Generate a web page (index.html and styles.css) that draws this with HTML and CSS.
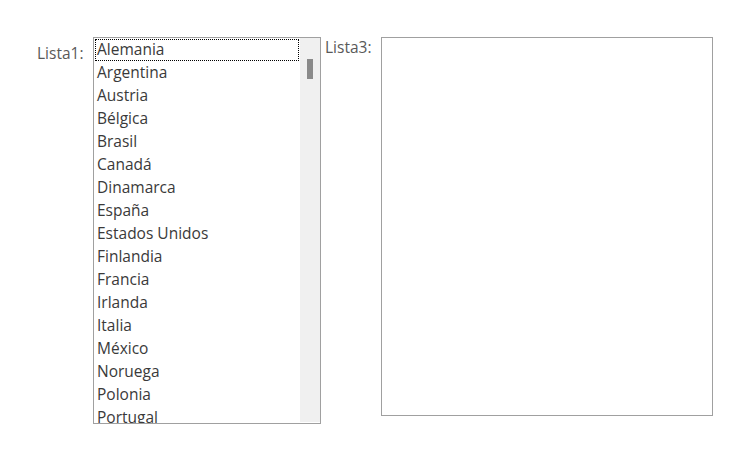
FILE: index.html
```html
<!DOCTYPE html>
<html lang="es">
<head>
<meta charset="utf-8">
<link rel="stylesheet" href="styles.css">
</head>
<body>
<div class="form">
  <div class="field field1">
    <span class="lbl lbl1">Lista1:</span>
    <div class="listbox">
      <div class="items">
        <div class="item focus">Alemania</div>
        <div class="item">Argentina</div>
        <div class="item">Austria</div>
        <div class="item">Bélgica</div>
        <div class="item">Brasil</div>
        <div class="item">Canadá</div>
        <div class="item">Dinamarca</div>
        <div class="item">España</div>
        <div class="item">Estados Unidos</div>
        <div class="item">Finlandia</div>
        <div class="item">Francia</div>
        <div class="item">Irlanda</div>
        <div class="item">Italia</div>
        <div class="item">México</div>
        <div class="item">Noruega</div>
        <div class="item">Polonia</div>
        <div class="item">Portugal</div>
      </div>
      <div class="scrollbar"><div class="thumb"></div></div>
    </div>
  </div>
  <div class="field field3">
    <span class="lbl lbl3">Lista3:</span>
    <div class="listbox3"></div>
  </div>
</div>
</body>
</html>
```

FILE: styles.css
```css
html, body {
  margin: 0;
  padding: 0;
  background: #ffffff;
}
body {
  font-family: "Open Sans", "Noto Sans", sans-serif;
  font-size: 15.5px;
}
.form {
  display: flex;
  align-items: flex-start;
  padding: 37px 0 0 37px;
}
.field {
  display: flex;
  align-items: flex-start;
}
.lbl {
  color: #595959;
  line-height: 20px;
  white-space: nowrap;
}
.lbl1 {
  width: 56px;
  margin-top: 6px;
}
.lbl3 {
  margin-left: 4px;
  width: 56px;
  margin-top: 0;
}
.listbox {
  width: 226px;
  height: 385px;
  border: 1px solid #a0a0a0;
  display: flex;
  overflow: hidden;
}
.items {
  flex: 1;
  padding: 1px 1px 0 1px;
}
.item {
  height: 23px;
  line-height: 21px;
  padding-left: 2px;
  color: #3a3a3a;
  white-space: nowrap;
  box-sizing: border-box;
}
.item.focus {
  outline: 1px dotted #000;
  outline-offset: -1px;
  height: 22px;
  margin-bottom: 1px;
}
.scrollbar {
  width: 20px;
  height: 384px;
  background: #f0f0f0;
  display: flex;
  justify-content: center;
}
.thumb {
  width: 6px;
  height: 20px;
  margin-top: 21px;
  background: #8a8a8a;
}
.listbox3 {
  width: 330px;
  height: 377px;
  border: 1px solid #a0a0a0;
}
```
